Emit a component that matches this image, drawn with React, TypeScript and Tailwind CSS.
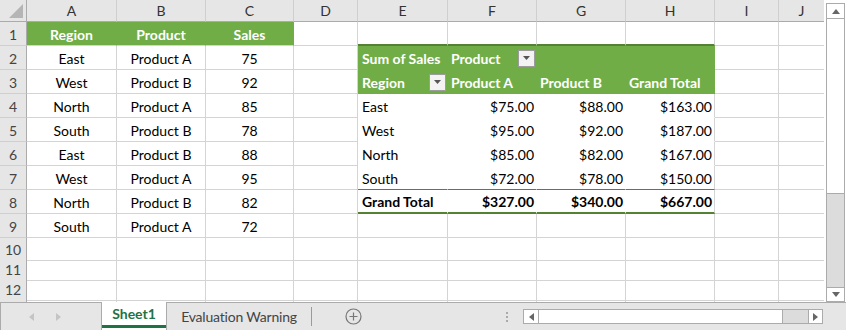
const GRID =
  "grid grid-cols-[27px_90px_89px_88px_64px_90px_89px_89px_89px_64px_46px]";

const LINE = "border-r border-b border-[#d4d4d4]";

type Cell = { text?: React.ReactNode; cls?: string };

const data = [
  ["East", "Product A", "75"],
  ["West", "Product B", "92"],
  ["North", "Product A", "85"],
  ["South", "Product B", "78"],
  ["East", "Product B", "88"],
  ["West", "Product A", "95"],
  ["North", "Product B", "82"],
  ["South", "Product A", "72"],
];

const pivot = [
  ["East", "$75.00", "$88.00", "$163.00"],
  ["West", "$95.00", "$92.00", "$187.00"],
  ["North", "$85.00", "$82.00", "$167.00"],
  ["South", "$72.00", "$78.00", "$150.00"],
  ["Grand Total", "$327.00", "$340.00", "$667.00"],
];

function DropDown() {
  return (
    <span className="w-[17px] h-[17px] bg-[#f3f3f3] border border-[#9c9c9c] flex items-center justify-center">
      <svg width="7" height="4" viewBox="0 0 7 4">
        <path d="M0 0h7L3.5 4z" fill="#555" />
      </svg>
    </span>
  );
}

function Row({ num, cells, h }: { num?: number; cells: Cell[]; h: string }) {
  return (
    <div className={`${GRID} ${h}`}>
      <div className="bg-[#e6e6e6] border-r border-b border-r-[#ababab] border-b-[#d0d0d0] flex items-center justify-center pt-px text-[#444] text-[14px]">
        {num}
      </div>
      {cells.map((c, i) => (
        <div
          key={i}
          className={`${LINE} flex items-center pt-px overflow-hidden whitespace-nowrap ${
            i === 9 ? "border-r-[#ababab]" : ""
          } ${c.cls ?? ""}`}
        >
          {c.text}
        </div>
      ))}
    </div>
  );
}

function buildRow(r: number): Cell[] {
  const cells: Cell[] = Array.from({ length: 10 }, () => ({}));
  const green = "bg-[#70ad47] border-r-transparent text-white font-bold justify-center";
  if (r === 1) {
    cells[0] = { text: "Region", cls: green };
    cells[1] = { text: "Product", cls: green };
    cells[2] = { text: "Sales", cls: green };
    for (let i = 4; i < 8; i++) cells[i] = { cls: "border-b-2 border-b-[#548235]" };
  } else if (r <= 9) {
    const d = data[r - 2];
    cells[0] = { text: d[0], cls: "justify-center" };
    cells[1] = { text: d[1], cls: "justify-center" };
    cells[2] = { text: d[2], cls: "justify-center" };
  }
  const pg = "bg-[#70ad47] border-r-transparent border-b-transparent text-white font-bold";
  if (r === 2) {
    cells[4] = { text: "Sum of Sales", cls: `${pg} pl-[4px]` };
    cells[5] = {
      text: (
        <>
          <span className="flex-1">Product</span>
          <span className="mr-[1px]">
            <DropDown />
          </span>
        </>
      ),
      cls: `${pg} pl-[3px]`,
    };
    cells[6] = { cls: pg };
    cells[7] = { cls: pg };
  }
  if (r === 3) {
    cells[4] = {
      text: (
        <>
          <span className="flex-1">Region</span>
          <span className="mr-[1px]">
            <DropDown />
          </span>
        </>
      ),
      cls: `${pg} pl-[4px]`,
    };
    cells[5] = { text: "Product A", cls: `${pg} pl-[3px]` };
    cells[6] = { text: "Product B", cls: `${pg} pl-[3px]` };
    cells[7] = { text: "Grand Total", cls: `${pg} pl-[3px]` };
  }
  if (r >= 4 && r <= 8) {
    const p = pivot[r - 4];
    const bold = r === 8 ? "font-bold" : "";
    const bottom =
      r === 7
        ? "border-b-[#548235]"
        : r === 8
        ? "border-b-2 border-b-[#548235]"
        : "border-b-transparent";
    cells[4] = { text: p[0], cls: `${bold} ${bottom} border-r-transparent pl-[4px]` };
    cells[5] = { text: p[1], cls: `${bold} ${bottom} border-r-transparent justify-end pr-[2px]` };
    cells[6] = { text: p[2], cls: `${bold} ${bottom} border-r-transparent justify-end pr-[2px]` };
    cells[7] = { text: p[3], cls: `${bold} ${bottom} justify-end pr-[2px]` };
  }
  return cells;
}

const COLS = ["A", "B", "C", "D", "E", "F", "G", "H", "I", "J"];

export default function App() {
  return (
    <div className="w-[846px] h-[330px] bg-white overflow-hidden font-['Lato',sans-serif] text-[14px] text-black select-none flex flex-col">
      <div className="flex h-[302px]">
        <div className="w-[824px] h-[302px] overflow-hidden">
          {/* column headers */}
          <div className={`${GRID} h-[22px]`}>
            <div className="bg-[#e6e6e6] border-r border-b border-[#ababab] border-b-[#ababab] relative">
              <svg className="absolute right-[3px] bottom-[3px]" width="14" height="14" viewBox="0 0 14 14">
                <path d="M14 0V14H0z" fill="#b5b5b5" />
              </svg>
            </div>
            {COLS.map((c, i) => (
              <div
                key={c}
                className={`bg-[#e6e6e6] border-r border-b border-r-[#cfcfcf] border-b-[#ababab] flex items-center justify-center text-[#333] ${
                  i === 9 ? "border-r-[#ababab]" : ""
                }`}
              >
                {c}
              </div>
            ))}
          </div>
          {Array.from({ length: 9 }, (_, i) => (
            <Row key={i} num={i + 1} cells={buildRow(i + 1)} h="h-[24px]" />
          ))}
          {[10, 11, 12].map((n) => (
            <Row key={n} num={n} cells={buildRow(n)} h="h-[20px]" />
          ))}
          <Row cells={buildRow(13)} h="h-[20px]" />
        </div>
        {/* vertical scrollbar */}
        <div className="w-[22px] pl-[2px] pt-[3px] flex flex-col bg-white">
          <div className="w-[19px] flex-1 flex flex-col border border-[#ababab] bg-[#dcdcdc]">
            <div className="h-[15px] bg-white border-b border-[#ababab] flex items-center justify-center">
              <svg width="8" height="5" viewBox="0 0 8 5">
                <path d="M0 5h8L4 0z" fill="#666" />
              </svg>
            </div>
            <div className="h-[175px] bg-white border-b border-[#ababab]" />
            <div className="flex-1" />
            <div className="h-[14px] bg-white border-t border-[#ababab] flex items-center justify-center">
              <svg width="8" height="5" viewBox="0 0 8 5">
                <path d="M0 0h8L4 5z" fill="#666" />
              </svg>
            </div>
          </div>
        </div>
      </div>
      {/* sheet tabs */}
      <div className="h-[28px] flex items-stretch bg-[#e6e6e6] border-t border-[#ababab]">
        <div className="w-[101px] border-l border-[#ababab] flex items-center gap-[22px] pl-[28px]">
          <svg width="5" height="8" viewBox="0 0 5 8">
            <path d="M5 0v8L0 4z" fill="#c4c4c4" />
          </svg>
          <svg width="5" height="8" viewBox="0 0 5 8">
            <path d="M0 0v8l5-4z" fill="#c4c4c4" />
          </svg>
        </div>
        <div className="w-[66px] -mt-px bg-white border-x border-[#ababab] flex flex-col">
          <div className="flex-1 flex items-center justify-center font-bold text-[#217346]">Sheet1</div>
          <div className="h-[3px] bg-[#217346] mb-[2px]" />
        </div>
        <div className="w-[144px] flex items-center justify-center text-[#444] tracking-[-0.2px]">
          Evaluation Warning
        </div>
        <div className="w-px my-[4px] bg-[#9a9a9a]" />
        <div className="w-[82px] flex items-center justify-center">
          <svg width="17" height="17" viewBox="0 0 17 17">
            <circle cx="8.5" cy="8.5" r="7.5" fill="none" stroke="#777" strokeWidth="1.2" />
            <path d="M8.5 4.5v8M4.5 8.5h8" stroke="#777" strokeWidth="1.2" />
          </svg>
        </div>
        <div className="w-[129px] flex items-center justify-end pr-[15px]">
          <div className="flex flex-col gap-[2px]">
            <span className="w-[2px] h-[2px] bg-[#aaa]" />
            <span className="w-[2px] h-[2px] bg-[#aaa]" />
            <span className="w-[2px] h-[2px] bg-[#aaa]" />
          </div>
        </div>
        <div className="w-[300px] my-[6px] flex border border-[#ababab] bg-[#dcdcdc]">
          <div className="w-[15px] bg-white border-r border-[#ababab] flex items-center justify-center">
            <svg width="5" height="8" viewBox="0 0 5 8">
              <path d="M5 0v8L0 4z" fill="#666" />
            </svg>
          </div>
          <div className="w-[244px] bg-white border-r border-[#ababab]" />
          <div className="flex-1" />
          <div className="w-[14px] bg-white border-l border-[#ababab] flex items-center justify-center">
            <svg width="5" height="8" viewBox="0 0 5 8">
              <path d="M0 0v8l5-4z" fill="#666" />
            </svg>
          </div>
        </div>
      </div>
    </div>
  );
}
